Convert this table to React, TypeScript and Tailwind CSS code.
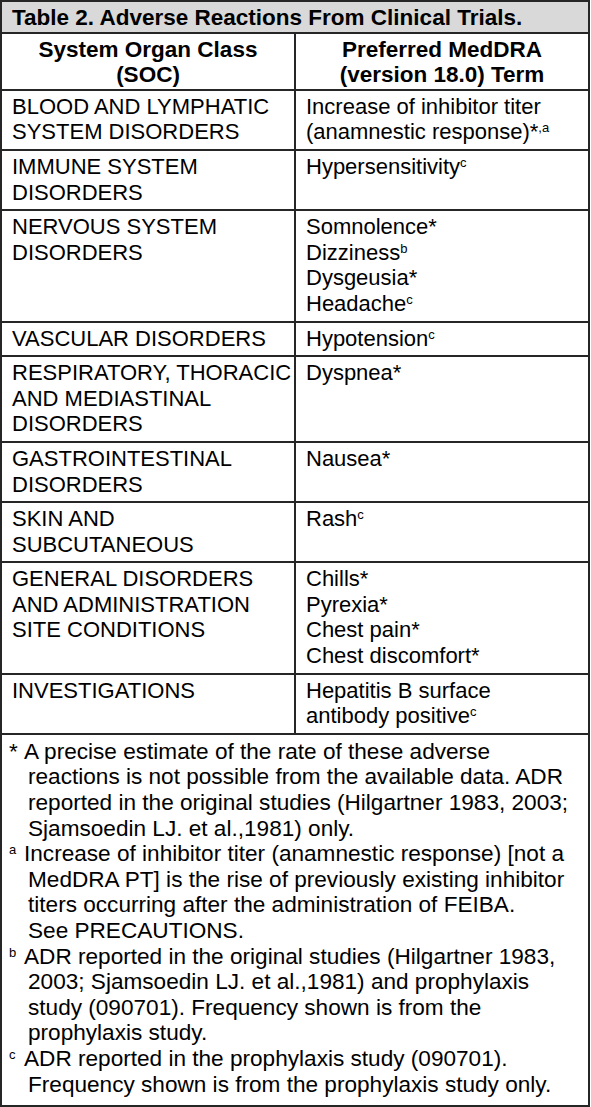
const rows: { soc: string[]; terms: React.ReactNode[] }[] = [
  {
    soc: ["BLOOD AND LYMPHATIC", "SYSTEM DISORDERS"],
    terms: [
      "Increase of inhibitor titer",
      <>
        (anamnestic response)*<sup className="text-[13px] top-[-7px]">,a</sup>
      </>,
    ],
  },
  {
    soc: ["IMMUNE SYSTEM", "DISORDERS"],
    terms: [
      <>
        Hypersensitivity<sup className="text-[13px] top-[-7px]">c</sup>
      </>,
    ],
  },
  {
    soc: ["NERVOUS SYSTEM", "DISORDERS"],
    terms: [
      "Somnolence*",
      <>
        Dizziness<sup className="text-[13px] top-[-7px]">b</sup>
      </>,
      "Dysgeusia*",
      <>
        Headache<sup className="text-[13px] top-[-7px]">c</sup>
      </>,
    ],
  },
  {
    soc: ["VASCULAR DISORDERS"],
    terms: [
      <>
        Hypotension<sup className="text-[13px] top-[-7px]">c</sup>
      </>,
    ],
  },
  {
    soc: ["RESPIRATORY, THORACIC", "AND MEDIASTINAL", "DISORDERS"],
    terms: ["Dyspnea*"],
  },
  {
    soc: ["GASTROINTESTINAL", "DISORDERS"],
    terms: ["Nausea*"],
  },
  {
    soc: ["SKIN AND", "SUBCUTANEOUS"],
    terms: [
      <>
        Rash<sup className="text-[13px] top-[-7px]">c</sup>
      </>,
    ],
  },
  {
    soc: ["GENERAL DISORDERS", "AND ADMINISTRATION", "SITE CONDITIONS"],
    terms: ["Chills*", "Pyrexia*", "Chest pain*", "Chest discomfort*"],
  },
  {
    soc: ["INVESTIGATIONS"],
    terms: [
      "Hepatitis B surface",
      <>
        antibody positive<sup className="text-[13px] top-[-7px]">c</sup>
      </>,
    ],
  },
];

const notes: { mark: React.ReactNode; lines: string[] }[] = [
  {
    mark: "*",
    lines: [
      "A precise estimate of the rate of these adverse",
      "reactions is not possible from the available data. ADR",
      "reported in the original studies (Hilgartner 1983, 2003;",
      "Sjamsoedin LJ. et al.,1981) only.",
    ],
  },
  {
    mark: <sup className="text-[13px] top-[-7px]">a</sup>,
    lines: [
      "Increase of inhibitor titer (anamnestic response) [not a",
      "MedDRA PT] is the rise of previously existing inhibitor",
      "titers occurring after the administration of FEIBA.",
      "See PRECAUTIONS.",
    ],
  },
  {
    mark: <sup className="text-[13px] top-[-7px]">b</sup>,
    lines: [
      "ADR reported in the original studies (Hilgartner 1983,",
      "2003; Sjamsoedin LJ. et al.,1981) and prophylaxis",
      "study (090701). Frequency shown is from the",
      "prophylaxis study.",
    ],
  },
  {
    mark: <sup className="text-[13px] top-[-7px]">c</sup>,
    lines: [
      "ADR reported in the prophylaxis study (090701).",
      "Frequency shown is from the prophylaxis study only.",
    ],
  },
];

export default function App() {
  return (
    <div className="bg-white w-[591px] min-h-[1107px] font-['Liberation_Sans',Arial,sans-serif] text-[22px] leading-[25.6px] text-black">
      <table className="w-[590px] border-collapse border-2 border-[#262626] table-fixed">
        <thead>
          <tr>
            <th
              colSpan={2}
              className="bg-[#d9d9d9] border-2 border-[#262626] text-left font-bold text-[22.5px] px-[10px] pt-[3px] pb-[1px]"
            >
              Table 2. Adverse Reactions From Clinical Trials.
            </th>
          </tr>
          <tr>
            <th className="w-[296px] border-2 border-[#262626] font-bold text-[22.5px] text-center pt-[3px] pb-[1px]">
              System Organ Class
              <br />
              (SOC)
            </th>
            <th className="border-2 border-[#262626] font-bold text-[22.5px] text-center pt-[3px] pb-[1px]">
              Preferred MedDRA
              <br />
              (version 18.0) Term
            </th>
          </tr>
        </thead>
        <tbody>
          {rows.map((r, i) => (
            <tr key={i}>
              <td className="border-2 border-[#262626] align-top px-[10px] pt-[3px] pb-[4px] whitespace-nowrap">
                {r.soc.map((l, j) => (
                  <div key={j}>{l}</div>
                ))}
              </td>
              <td className="border-2 border-[#262626] align-top px-[10px] pt-[3px] pb-[4px] whitespace-nowrap">
                {r.terms.map((t, j) => (
                  <div key={j}>{t}</div>
                ))}
              </td>
            </tr>
          ))}
          <tr>
            <td colSpan={2} className="border-2 border-[#262626] text-[22.6px] pl-[7px] pr-2 pt-[4px] pb-[8px]">
              {notes.map((n, i) => (
                <div key={i} className="pl-[19px] whitespace-nowrap">
                  {n.lines.map((l, j) => (
                    <div key={j} className={j === 0 ? "-ml-[19px] flex" : ""}>
                      {j === 0 ? (
                        <>
                          <span className="w-[15px] shrink-0">{n.mark}</span>
                          <span>{l}</span>
                        </>
                      ) : (
                        l
                      )}
                    </div>
                  ))}
                </div>
              ))}
            </td>
          </tr>
        </tbody>
      </table>
    </div>
  );
}
